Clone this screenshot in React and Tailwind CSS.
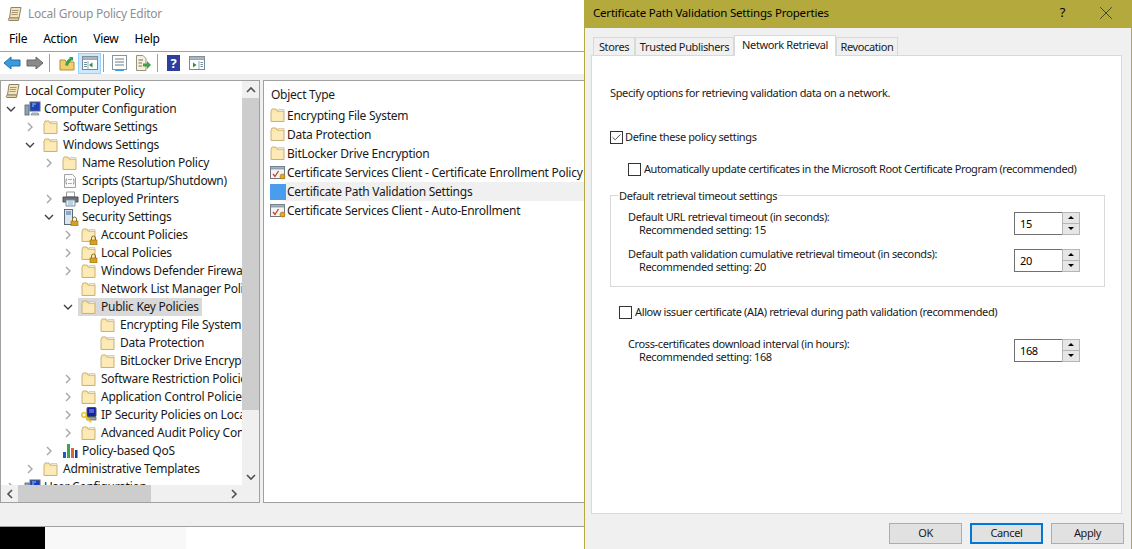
import { Check, X } from "lucide-react"

const Folder = ({ className = "" }) => (
  <svg viewBox="0 0 15 15" className={`w-[15px] h-[15px] shrink-0 ${className}`}>
    <path d="M1 3.5 L1 13.5 L14 13.5 L14 3 L7 3 L6 1 L2 1 Z" fill="#fbe6a6" stroke="#c8b27d" strokeWidth="1" />
    <path d="M2 4.5 L13 4.5 L13 12.5 L2 12.5 Z" fill="#fcebb8" />
    <path d="M8 1.5 L14 1.5 L14 3 L8 3 Z" fill="#fff" stroke="#c8b27d" strokeWidth="0.6" />
  </svg>
)

const LockFolder = () => (
  <div className="relative w-[16px] h-[15px] shrink-0">
    <Folder />
    <svg viewBox="0 0 9 10" className="absolute right-[-1px] bottom-[-2px] w-[9px] h-[10px]">
      <path d="M2.5 5 V3 a2 2 0 0 1 4 0 V5" fill="none" stroke="#8a6d1f" strokeWidth="1" />
      <rect x="1" y="5" width="7" height="5" fill="#d6a21e" stroke="#8a6d1f" strokeWidth="0.6" />
    </svg>
  </div>
)

const ScrollDoc = ({ className = "" }) => (
  <svg viewBox="0 0 16 16" className={`w-[16px] h-[16px] shrink-0 ${className}`}>
    <path d="M4 1.5 H14 L12 12 H2.5 Z" fill="#f3e6bd" stroke="#8f8464" strokeWidth="1" />
    <path d="M2.5 12 H12 L11.5 14.5 H2 C1 14.5 1 12 2.5 12 Z" fill="#e4d5a5" stroke="#8f8464" strokeWidth="1" />
    <path d="M5 4.5 H11.5 M4.7 6.5 H11 M4.4 8.5 H10.7" stroke="#8f8464" strokeWidth="0.8" />
  </svg>
)

const ComputerIcon = () => (
  <svg viewBox="0 0 17 16" className="w-[17px] h-[16px] shrink-0">
    <rect x="1" y="4" width="4" height="10" fill="#8fa3b5" stroke="#4d6175" strokeWidth="0.8" />
    <rect x="6" y="1" width="10" height="9" fill="#1d3fb8" stroke="#5d6b78" strokeWidth="1" />
    <path d="M8 3 H12 M8 5 H10" stroke="#8fd0ff" strokeWidth="1" />
    <path d="M8 12 H14 L15 14 H7 Z" fill="#c3ccd4" stroke="#5d6b78" strokeWidth="0.6" />
  </svg>
)

const ScriptsIcon = () => (
  <svg viewBox="0 0 16 16" className="w-[16px] h-[16px] shrink-0">
    <path d="M2.5 1.5 H10.5 L13.5 4.5 V14.5 H2.5 Z" fill="#fbfbfb" stroke="#a3a3a3" />
    <path d="M5 6 H4.2 V8 L3.6 8.5 L4.2 9 V11 H5 M11 6 H11.8 V8 L12.4 8.5 L11.8 9 V11 H11" fill="none" stroke="#7d7d7d" strokeWidth="0.8" />
    <path d="M6 6.5 H10 M6 10.5 H10" stroke="#9b9b9b" strokeWidth="0.8" />
  </svg>
)

const PrinterIcon = () => (
  <svg viewBox="0 0 17 16" className="w-[17px] h-[16px] shrink-0">
    <path d="M4.5 1 H12.5 V6 H4.5 Z" fill="#fff" stroke="#9a9a9a" />
    <path d="M1 6 H16 V11 H1 Z" fill="#6b7378" stroke="#4a5156" />
    <path d="M4 9 H13 V15 H4 Z" fill="#eaf2f8" stroke="#7d8b96" />
    <path d="M6 11 H11 M6 13 H11" stroke="#7bb3db" />
  </svg>
)

const SecurityIcon = () => (
  <div className="relative w-[16px] h-[16px] shrink-0">
    <svg viewBox="0 0 16 16" className="w-[16px] h-[16px]">
      <rect x="2.5" y="0.5" width="8" height="15" fill="#dfe5ea" stroke="#5c6b79" />
      <path d="M4 3 H9 M4 5 H9" stroke="#3a6ea5" />
    </svg>
    <svg viewBox="0 0 9 10" className="absolute right-[-1px] bottom-[-1px] w-[9px] h-[10px]">
      <path d="M2.5 5 V3 a2 2 0 0 1 4 0 V5" fill="none" stroke="#8a6d1f" strokeWidth="1" />
      <rect x="1" y="5" width="7" height="5" fill="#d6a21e" stroke="#8a6d1f" strokeWidth="0.6" />
    </svg>
  </div>
)

const IpSecIcon = () => (
  <svg viewBox="0 0 16 16" className="w-[16px] h-[16px] shrink-0">
    <rect x="6" y="0.5" width="9" height="9" rx="1" fill="#16209a" stroke="#4a4f57" />
    <path d="M8 3 H13 M8 5 H13" stroke="#7fb0ff" />
    <rect x="6" y="10" width="9" height="3" fill="#9aa3ab" stroke="#4a4f57" strokeWidth="0.6" />
    <circle cx="3" cy="8" r="2.2" fill="none" stroke="#e6c81c" strokeWidth="1.6" />
    <path d="M4.5 9.5 L10 15" stroke="#e6c81c" strokeWidth="1.8" />
  </svg>
)

const QosIcon = () => (
  <svg viewBox="0 0 16 16" className="w-[16px] h-[16px] shrink-0">
    <rect x="1" y="9" width="3" height="6" fill="#1d5fb8" />
    <rect x="5" y="1" width="3" height="14" fill="#3fa34d" />
    <rect x="9" y="5" width="3" height="10" fill="#e2603f" />
    <rect x="13" y="7" width="2.5" height="8" fill="#1d3f8a" />
  </svg>
)

const CertPolicy = ({ selected }) => (
  <div className="relative w-[16px] h-[16px] shrink-0">
    <svg viewBox="0 0 16 16" className="w-[16px] h-[16px]">
      <rect x="0.5" y="1.5" width="14" height="12" fill="#f5f5f5" stroke="#6f7880" />
      <rect x="0.5" y="1.5" width="14" height="2.5" fill="#9db4c8" stroke="#6f7880" strokeWidth="0.6" />
      <path d="M3 9 L5 11.5 L8.5 6" fill="none" stroke="#d0392c" strokeWidth="1.3" />
      <circle cx="12.5" cy="11.5" r="2.5" fill="#e4a91f" stroke="#9a6d12" strokeWidth="0.6" />
    </svg>
    {selected && <div className="absolute inset-0 bg-[#4a9cec]" />}
  </div>
)

const Chevron = ({ open }) => (
  <svg viewBox="0 0 10 10" className="w-[10px] h-[10px]">
    {open ? (
      <path d="M1 3 L5 7 L9 3" fill="none" stroke="#404040" strokeWidth="1.4" />
    ) : (
      <path d="M3 1 L7 5 L3 9" fill="none" stroke="#a6a6a6" strokeWidth="1.4" />
    )}
  </svg>
)

const treeItems = [
  { level: -1, icon: <ScrollDoc />, label: "Local Computer Policy" },
  { level: 0, icon: <ComputerIcon />, label: "Computer Configuration", state: "open" },
  { level: 1, icon: <Folder />, label: "Software Settings", state: "closed" },
  { level: 1, icon: <Folder />, label: "Windows Settings", state: "open" },
  { level: 2, icon: <Folder />, label: "Name Resolution Policy", state: "closed" },
  { level: 2, icon: <ScriptsIcon />, label: "Scripts (Startup/Shutdown)" },
  { level: 2, icon: <PrinterIcon />, label: "Deployed Printers", state: "closed" },
  { level: 2, icon: <SecurityIcon />, label: "Security Settings", state: "open" },
  { level: 3, icon: <LockFolder />, label: "Account Policies", state: "closed" },
  { level: 3, icon: <LockFolder />, label: "Local Policies", state: "closed" },
  { level: 3, icon: <Folder />, label: "Windows Defender Firewall with Advanced Security", state: "closed" },
  { level: 3, icon: <Folder />, label: "Network List Manager Policies" },
  { level: 3, icon: <Folder />, label: "Public Key Policies", state: "open", selected: true },
  { level: 4, icon: <Folder />, label: "Encrypting File System" },
  { level: 4, icon: <Folder />, label: "Data Protection" },
  { level: 4, icon: <Folder />, label: "BitLocker Drive Encryption" },
  { level: 3, icon: <Folder />, label: "Software Restriction Policies", state: "closed" },
  { level: 3, icon: <Folder />, label: "Application Control Policies", state: "closed" },
  { level: 3, icon: <IpSecIcon />, label: "IP Security Policies on Local Computer", state: "closed" },
  { level: 3, icon: <Folder />, label: "Advanced Audit Policy Configuration", state: "closed" },
  { level: 2, icon: <QosIcon />, label: "Policy-based QoS", state: "closed" },
  { level: 1, icon: <Folder />, label: "Administrative Templates", state: "closed" },
  { level: 0, icon: <ComputerIcon />, label: "User Configuration", state: "closed" },
]

const TreeRow = ({ item }) => (
  <div
    className="flex items-center h-[18px] whitespace-nowrap"
    style={{ paddingLeft: item.level < 0 ? 1 : item.level * 19 }}
  >
    {item.level >= 0 && (
      <div className="w-[20px] flex justify-center shrink-0 pr-[1px]">
        {item.state && <Chevron open={item.state === "open"} />}
      </div>
    )}
    <div className={`flex items-center h-[18px] pl-[3px] pr-[3px] ${item.selected ? "bg-[#d9d9d9]" : ""}`}>
      <div className="w-[20px] shrink-0">{item.icon}</div>
      <span>{item.label}</span>
    </div>
  </div>
)

const listItems = [
  { type: "folder", label: "Encrypting File System" },
  { type: "folder", label: "Data Protection" },
  { type: "folder", label: "BitLocker Drive Encryption" },
  { type: "cert", label: "Certificate Services Client - Certificate Enrollment Policy" },
  { type: "cert", label: "Certificate Path Validation Settings", selected: true },
  { type: "cert", label: "Certificate Services Client - Auto-Enrollment" },
]

const PaneIcon = ({ right }) => (
  <svg viewBox="0 0 16 14" className="w-[16px] h-[14px]">
    <rect x="0.5" y="0.5" width="15" height="13" fill="#fff" stroke="#7a8690" />
    <rect x="0.5" y="0.5" width="15" height="3" fill="#aab6c0" stroke="#7a8690" strokeWidth="0.6" />
    <path d={right ? "M10 5 V13" : "M6 5 V13"} stroke="#9aa5ae" />
    <path d={right ? "M4 6.5 L7.5 9 L4 11.5 Z" : "M10.5 6.5 L7 9 L10.5 11.5 Z"} fill="#2f8f3f" />
    <path d={right ? "M11.5 6.5 H14 M11.5 8.5 H14 M11.5 10.5 H14" : "M2 6.5 H5 M2 8.5 H5 M2 10.5 H5"} stroke="#6f8ea8" />
  </svg>
)

const Toolbar = () => (
  <div className="flex items-center h-[23px] bg-white border-t border-[#a0a0a0] pl-[3px]">
    <svg viewBox="0 0 18 14" className="w-[18px] h-[14px]">
      <path d="M1 7 L8 1 V4 H17 V10 H8 V13 Z" fill="#3d9bdc" stroke="#1e6fb0" />
    </svg>
    <svg viewBox="0 0 18 14" className="w-[18px] h-[14px] ml-[5px]">
      <path d="M17 7 L10 1 V4 H1 V10 H10 V13 Z" fill="#8a8a8a" stroke="#666" />
    </svg>
    <div className="w-px h-[18px] bg-[#a0a0a0] ml-[5px]" />
    <svg viewBox="0 0 16 15" className="w-[16px] h-[15px] ml-[9px]">
      <path d="M1 4 H6 L7 6 H15 V14 H1 Z" fill="#f2cf6b" stroke="#b08f3a" />
      <path d="M6 9 C7 5 9 3 11 2 L10 1 H14 V5 L13 4 C11 6 9 8 9 10 Z" fill="#3f9f4a" />
    </svg>
    <div className="w-[23px] h-[21px] flex items-center justify-center ml-[3px] bg-[#cce8ff] border border-[#99d1ff]">
      <PaneIcon />
    </div>
    <div className="w-px h-[18px] bg-[#a0a0a0] ml-[2px]" />
    <svg viewBox="0 0 15 16" className="w-[15px] h-[16px] ml-[8px]">
      <rect x="0.5" y="0.5" width="14" height="14" fill="#fff" stroke="#8a949c" />
      <path d="M3 4 H12 M3 7 H12 M3 10 H12" stroke="#707a82" />
      <path d="M3 15.5 H12" stroke="#3d9bdc" />
    </svg>
    <svg viewBox="0 0 16 16" className="w-[16px] h-[16px] ml-[8px]">
      <path d="M1.5 0.5 H8 L11 3.5 V15.5 H1.5 Z" fill="#f6f1de" stroke="#9a9275" />
      <path d="M3.5 5 H8 M3.5 8 H7 M3.5 11 H7" stroke="#707070" />
      <path d="M8 8.5 H12 V6 L16 10 L12 14 V11.5 H8 Z" fill="#43a048" />
    </svg>
    <div className="w-px h-[18px] bg-[#a0a0a0] ml-[6px]" />
    <div className="w-[13px] h-[16px] ml-[9px] bg-[#2c3e9e] flex items-center justify-center text-white text-[13px] font-bold leading-none">?</div>
    <div className="ml-[9px]">
      <PaneIcon right />
    </div>
  </div>
)

const ScrollArrow = ({ d }) => (
  <svg viewBox="0 0 10 10" className="w-[10px] h-[10px]">
    <path d={d} fill="none" stroke="#505050" strokeWidth="1.6" />
  </svg>
)

const CheckBox = ({ checked }) => (
  <div className="w-[13px] h-[13px] border border-[#333] bg-white flex items-center justify-center shrink-0">
    {checked && <Check className="w-[11px] h-[11px] text-[#444]" strokeWidth={2} />}
  </div>
)

const Spinner = ({ value }) => (
  <div className="flex items-stretch h-[23px] w-[66px] shrink-0">
    <div className="flex-1 flex items-center bg-white border border-[#707070] border-r-0 pl-[5px] text-black leading-none">{value}</div>
    <div className="w-[18px] flex flex-col gap-px bg-[#b5b5b5] p-px">
      <div className="flex-1 bg-[#e6e6e6] flex items-center justify-center">
        <div className="w-0 h-0 border-x-[3.5px] border-x-transparent border-b-[3.5px] border-b-black" />
      </div>
      <div className="flex-1 bg-[#e6e6e6] flex items-center justify-center">
        <div className="w-0 h-0 border-x-[3.5px] border-x-transparent border-t-[3.5px] border-t-black" />
      </div>
    </div>
  </div>
)

const TimeoutRow = ({ label, recommended, value, className = "" }) => (
  <div className={`flex items-center justify-between ${className}`}>
    <div className="leading-[13px]">
      <div>{label}</div>
      <div className="pl-[11px]">{recommended}</div>
    </div>
    <Spinner value={value} />
  </div>
)

const DlgButton = ({ children, focused }) => (
  <button className={`w-[73px] h-[21px] flex items-center justify-center bg-[#e1e1e1] ${focused ? "border-2 border-[#0078d7]" : "border border-[#adadad]"}`}>
    {children}
  </button>
)

const tabs = [
  { label: "Stores", width: "w-[42px]" },
  { label: "Trusted Publishers", width: "w-[99px]" },
  { label: "Network Retrieval", width: "w-[102px]", active: true },
  { label: "Revocation", width: "w-[62px]" },
]

export default function App() {
  return (
    <div className="flex h-[549px] w-[1132px] overflow-hidden bg-white text-[12px] text-[#1a1a1a] font-['Noto_Sans','Open_Sans',sans-serif] tracking-[-0.25px]">
      <div className="w-[584px] shrink-0 flex flex-col bg-[#f0f0f0]">
        <div className="h-[27px] bg-white flex items-center pl-[7px] gap-[5px] text-[#8f8f8f]">
          <ScrollDoc />
          <span>Local Group Policy Editor</span>
        </div>
        <div className="h-[24px] bg-white flex items-center gap-[16px] pl-[9px] text-black">
          <span>File</span>
          <span>Action</span>
          <span>View</span>
          <span>Help</span>
        </div>
        <Toolbar />
        <div className="h-[6px]" />
        <div className="h-[423px] flex gap-[3px]">
          <div className="w-[260px] border border-[#a0a0a0] bg-white flex flex-col shrink-0">
            <div className="flex h-[404px]">
              <div className="w-[241px] overflow-hidden pt-px">
                {treeItems.map((item) => (
                  <TreeRow key={item.label} item={item} />
                ))}
              </div>
              <div className="w-[17px] bg-[#f0f0f0] flex flex-col">
                <div className="h-[17px] flex items-center justify-center">
                  <ScrollArrow d="M1 7 L5 3 L9 7" />
                </div>
                <div className="w-full h-[312px] bg-[#cdcdcd]" />
                <div className="flex-1" />
                <div className="h-[17px] flex items-center justify-center">
                  <ScrollArrow d="M1 3 L5 7 L9 3" />
                </div>
              </div>
            </div>
            <div className="flex-1 flex items-center bg-[#f0f0f0]">
              <div className="w-[17px] flex items-center justify-center">
                <ScrollArrow d="M7 1 L3 5 L7 9" />
              </div>
              <div className="w-[133px] h-full bg-[#cdcdcd]" />
              <div className="flex-1" />
              <div className="w-[17px] mr-[17px] flex items-center justify-center">
                <ScrollArrow d="M3 1 L7 5 L3 9" />
              </div>
            </div>
          </div>
          <div className="flex-1 border border-r-0 border-[#a0a0a0] bg-white overflow-hidden">
            <div className="h-[25px] flex items-center pl-[7px] pt-[3px]">Object Type</div>
            <div>
              {listItems.map((item) => (
                <div key={item.label} className="flex items-center h-[19px] pl-[6px] whitespace-nowrap">
                  <div className="w-[15px] shrink-0">
                    {item.type === "folder" ? <Folder /> : <CertPolicy selected={item.selected} />}
                  </div>
                  <div className={`flex-1 h-full flex items-center pl-[2px] ${item.selected ? "bg-[#f0f0f0]" : ""}`}>
                    <span>{item.label}</span>
                  </div>
                </div>
              ))}
            </div>
          </div>
        </div>
        <div className="h-[23px]" />
        <div className="flex-1 flex border-t border-[#a0a0a0] bg-white">
          <div className="w-[45px] bg-black" />
          <div className="w-[141px] bg-[#f8f8f8]" />
        </div>
      </div>

      <div className="flex-1 flex flex-col bg-[#f0f0f0] border-x border-[#b3a93c] text-[11px] tracking-[-0.37px]">
        <div className="h-[28px] shrink-0 bg-[#b3a93c] flex items-center justify-between pl-[8px] pr-[14px] pb-[2px] text-black">
          <span className="text-[11.5px] tracking-[-0.2px]">Certificate Path Validation Settings Properties</span>
          <div className="flex items-center gap-[30px]">
            <span className="text-[13px]">?</span>
            <X className="w-[22px] h-[22px] text-[#222]" strokeWidth={0.8} />
          </div>
        </div>
        <div className="flex items-end h-[27px] pl-[8px]">
          {tabs.map((t) => (
            <div
              key={t.label}
              className={
                t.active
                  ? `${t.width} h-[21px] flex items-center justify-center bg-white border border-b-0 border-[#d9d9d9] -mb-px z-10 pb-[1px]`
                  : `${t.width} h-[18px] flex items-center justify-center border border-b-0 border-[#d9d9d9] pt-[1px]`
              }
            >
              {t.label}
            </div>
          ))}
        </div>
        <div className="h-[459px] ml-[6px] mr-[9px] bg-white border border-[#d9d9d9] pl-[18px] pr-[16px] pt-[29px]">
          <div className="leading-[16px]">Specify options for retrieving validation data on a network.</div>
          <div className="flex items-center gap-[2px] mt-[28px] h-[16px]">
            <CheckBox checked />
            <span>Define these policy settings</span>
          </div>
          <div className="flex items-center gap-[3px] mt-[16px] ml-[18px] h-[16px]">
            <CheckBox />
            <span className="tracking-[-0.41px]">Automatically update certificates in the Microsoft Root Certificate Program (recommended)</span>
          </div>
          <div className="relative border border-[#d9d9d9] h-[92px] mt-[18px] pl-[17px] pr-[24px] pt-[14px]">
            <span className="absolute left-[7px] top-[-8px] bg-white px-px leading-[16px]">Default retrieval timeout settings</span>
            <TimeoutRow label="Default URL retrieval timeout (in seconds):" recommended="Recommended setting: 15" value="15" />
            <TimeoutRow
              label="Default path validation cumulative retrieval timeout (in seconds):"
              recommended="Recommended setting: 20"
              value="20"
              className="mt-[11px]"
            />
          </div>
          <div className="flex items-center gap-[3px] mt-[17px] ml-[9px] h-[16px]">
            <CheckBox />
            <span>Allow issuer certificate (AIA) retrieval during path validation (recommended)</span>
          </div>
          <div className="pl-[18px] pr-[25px] mt-[17px]">
            <TimeoutRow label="Cross-certificates download interval (in hours):" recommended="Recommended setting: 168" value="168" />
          </div>
        </div>
        <div className="flex justify-end gap-[8px] pr-[7px] pt-[9px]">
          <DlgButton>OK</DlgButton>
          <DlgButton focused>Cancel</DlgButton>
          <DlgButton>Apply</DlgButton>
        </div>
      </div>
    </div>
  )
}
